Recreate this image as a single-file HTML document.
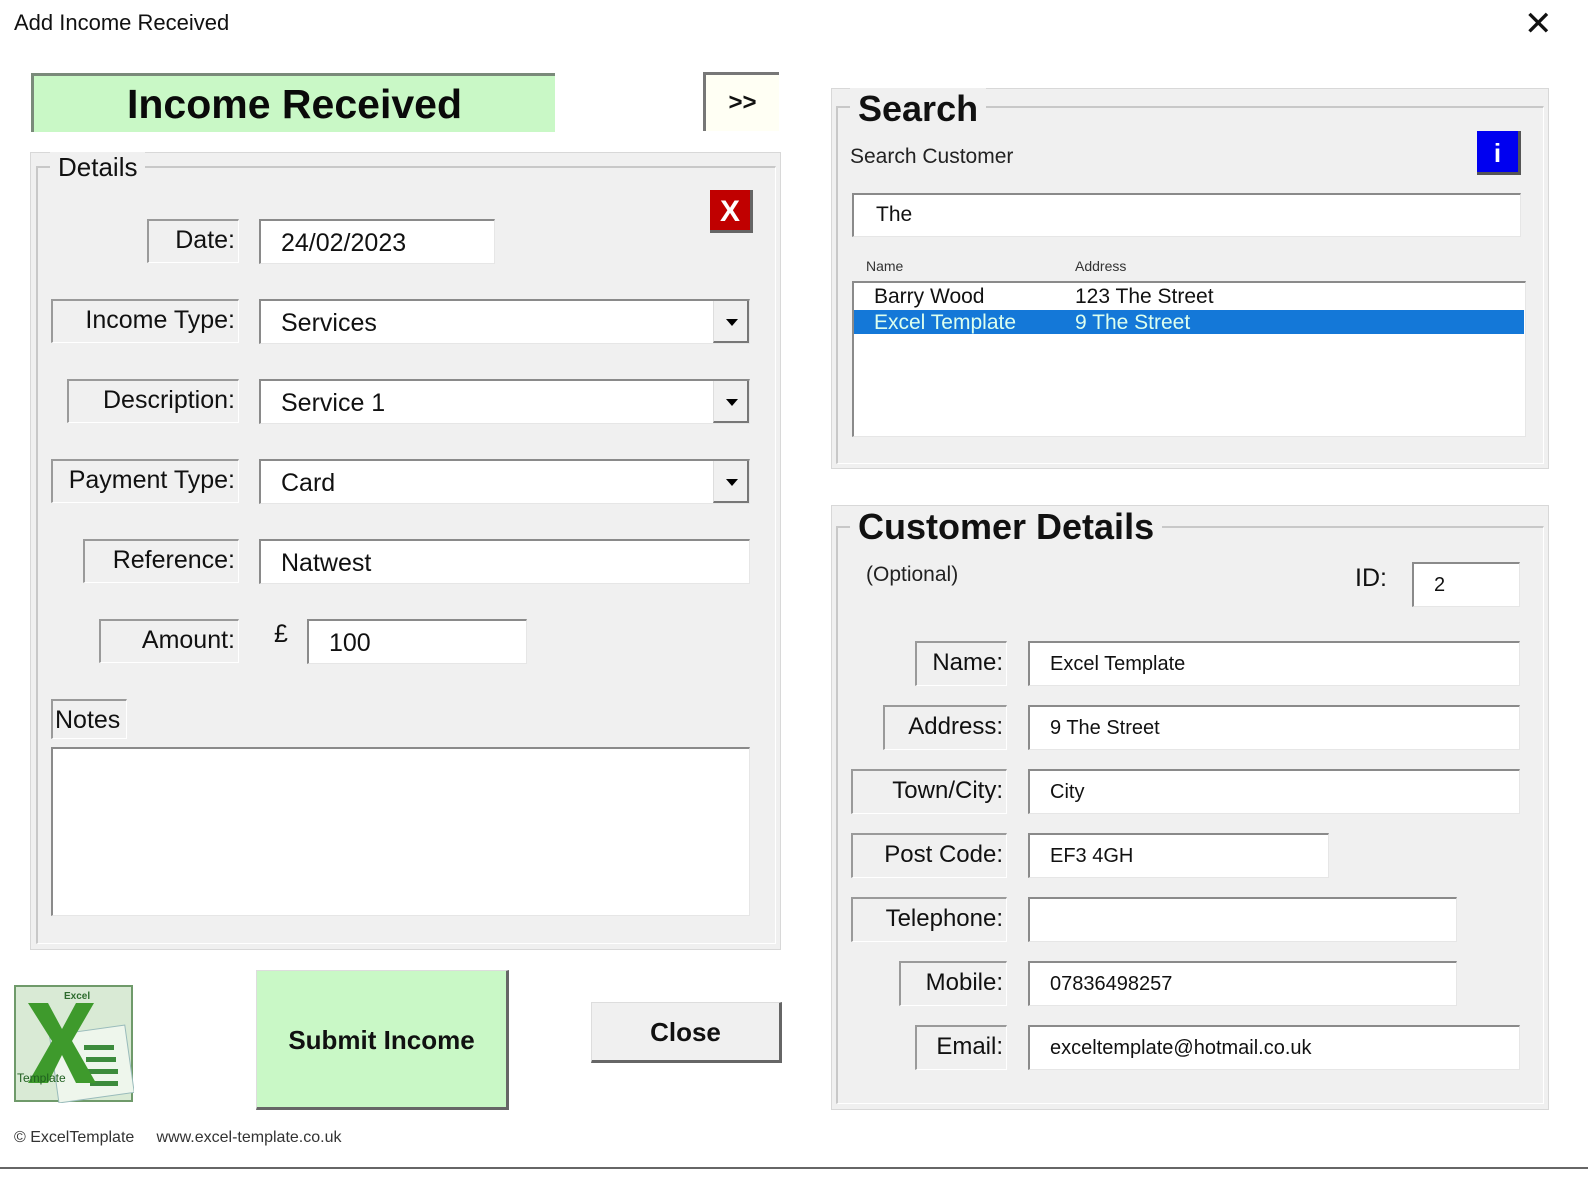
<!DOCTYPE html>
<html><head><meta charset="utf-8"><style>
*{box-sizing:border-box;margin:0;padding:0}
body{width:1588px;height:1186px;background:#fff;position:relative;overflow:hidden;font-family:"Liberation Sans","DejaVu Sans",sans-serif;color:#111}
.a{position:absolute}
.frame{position:absolute;background:#f0f0f0;border:1px solid #d8d8d8}
.gl{position:absolute;border-top:2px solid #c8c8c8;border-left:2px solid #c8c8c8;border-right:1px solid #fff;border-bottom:1px solid #fff}
.lbl{position:absolute;background:#f0f0f0;border-top:2px solid #9a9a9a;border-left:2px solid #9a9a9a;border-right:1px solid #fff;border-bottom:1px solid #fff;text-align:right;font-size:25px;padding-right:3px;line-height:38px}
.fld{position:absolute;background:#fff;border-top:2px solid #8a8a8a;border-left:2px solid #8a8a8a;border-right:1px solid #e6e6e6;border-bottom:1px solid #e6e6e6;font-size:25px;padding-left:20px;line-height:44px}
.dd{position:absolute;right:0;top:0;width:36px;height:100%;background:#f0f0f0;border-left:1px solid #ddd;border-right:2px solid #777;border-bottom:2px solid #777}
.dd:after{content:"";position:absolute;left:12px;top:18px;border-left:6px solid transparent;border-right:6px solid transparent;border-top:7px solid #000}
.r .lbl{font-size:24px;line-height:40px}
.r .fld{font-size:20px;line-height:42px}
</style></head><body>
<div class="a" style="left:14px;top:10px;font-size:22px">Add Income Received</div>
<div class="a" style="left:1524px;top:4px;font-size:34px;font-weight:300">✕</div>

<div class="a" style="left:31px;top:73px;width:524px;height:59px;background:#c9f8c6;border-top:3px solid #7a8a7a;border-left:3px solid #7a8a7a;font-weight:bold;font-size:41px;text-align:center;line-height:56px;color:#0a0a0a">Income Received</div>
<div class="a" style="left:703px;top:72px;width:76px;height:59px;background:#fffff4;border-top:3px solid #777;border-left:3px solid #777;font-size:24px;font-weight:bold;text-align:center;line-height:56px">&gt;&gt;</div>

<div class="frame" style="left:30px;top:152px;width:751px;height:798px"></div>
<div class="gl" style="left:36px;top:166px;width:740px;height:778px"></div>
<div class="a" style="left:50px;top:152px;background:#f0f0f0;padding:0 8px;font-size:26px">Details</div>
<div class="a" style="left:710px;top:190px;width:43px;height:43px;background:#c00000;color:#fff;font-weight:bold;font-size:30px;text-align:center;line-height:43px;border-right:3px solid #666;border-bottom:3px solid #666">X</div>

<div class="lbl" style="left:147px;top:219px;width:92px;height:44px">Date:</div>
<div class="fld" style="left:259px;top:219px;width:236px;height:45px">24/02/2023</div>
<div class="lbl" style="left:51px;top:299px;width:188px;height:44px">Income Type:</div>
<div class="fld" style="left:259px;top:299px;width:491px;height:45px">Services<div class="dd"></div></div>
<div class="lbl" style="left:67px;top:379px;width:172px;height:44px">Description:</div>
<div class="fld" style="left:259px;top:379px;width:491px;height:45px">Service 1<div class="dd"></div></div>
<div class="lbl" style="left:51px;top:459px;width:188px;height:44px">Payment Type:</div>
<div class="fld" style="left:259px;top:459px;width:491px;height:45px">Card<div class="dd"></div></div>
<div class="lbl" style="left:83px;top:539px;width:156px;height:44px">Reference:</div>
<div class="fld" style="left:259px;top:539px;width:491px;height:45px">Natwest</div>
<div class="lbl" style="left:99px;top:619px;width:140px;height:44px">Amount:</div>
<div class="a" style="left:274px;top:620px;font-size:25px">£</div>
<div class="fld" style="left:307px;top:619px;width:220px;height:45px">100</div>
<div class="lbl" style="left:51px;top:699px;width:76px;height:40px;text-align:left;padding-left:2px;line-height:38px">Notes</div>
<div class="fld" style="left:51px;top:747px;width:699px;height:169px"></div>

<svg class="a" style="left:14px;top:985px" width="120" height="118" viewBox="0 0 120 118">
<rect x="1" y="1" width="117" height="115" fill="#d9ead5" stroke="#6f9a6a" stroke-width="2"/>
<rect x="40" y="45" width="76" height="68" fill="#eef6ec" transform="rotate(-8 78 80)" stroke="#9bb"/>
<g fill="#3c8b3c"><rect x="70" y="60" width="30" height="5"/><rect x="72" y="72" width="30" height="5"/><rect x="74" y="84" width="30" height="5"/><rect x="76" y="96" width="28" height="5"/></g>
<path d="M14 18 L34 18 L48 44 L62 18 L80 18 L58 56 L82 98 L62 98 L48 70 L34 98 L14 98 L38 56 Z" fill="#3e9a2c"/>
<text x="50" y="14" font-size="10" font-weight="bold" fill="#2d6b2d" font-family="Liberation Sans">Excel</text>
<text x="3" y="97" font-size="12" fill="#1f5f1f" font-family="Liberation Sans">Template</text>
</svg>
<div class="a" style="left:256px;top:970px;width:253px;height:140px;background:#c9f8c6;border-right:3px solid #666;border-bottom:3px solid #666;border-top:1px solid #ddd;border-left:1px solid #ddd;font-weight:bold;font-size:26px;text-align:center;line-height:138px">Submit Income</div>
<div class="a" style="left:591px;top:1002px;width:191px;height:61px;background:#f0f0f0;border-right:3px solid #666;border-bottom:3px solid #666;border-top:1px solid #ddd;border-left:1px solid #ddd;font-weight:bold;font-size:26px;text-align:center;line-height:58px">Close</div>
<div class="a" style="left:14px;top:1129px;font-size:16px;color:#333">© ExcelTemplate&nbsp;&nbsp;&nbsp;&nbsp;&nbsp;www.excel-template.co.uk</div>
<div class="a" style="left:0;top:1167px;width:1588px;height:2px;background:#666"></div>

<!-- Search -->
<div class="frame" style="left:831px;top:88px;width:718px;height:381px"></div>
<div class="gl" style="left:836px;top:106px;width:708px;height:358px"></div>
<div class="a" style="left:850px;top:88px;background:#f0f0f0;padding:0 8px;font-size:36px;font-weight:bold">Search</div>
<div class="a" style="left:850px;top:145px;font-size:21px;color:#222">Search Customer</div>
<div class="a" style="left:1477px;top:131px;width:44px;height:44px;background:#0000f0;color:#fff;font-weight:bold;font-size:26px;text-align:center;line-height:44px;border-right:3px solid #555;border-bottom:3px solid #555">i</div>
<div class="fld" style="left:852px;top:193px;width:669px;height:44px;font-size:21px;padding-left:22px;line-height:40px">The</div>
<div class="a" style="left:866px;top:258px;font-size:14px;color:#333">Name</div>
<div class="a" style="left:1075px;top:258px;font-size:14px;color:#333">Address</div>
<div class="fld" style="left:852px;top:281px;width:674px;height:156px;padding:0"></div>
<div class="a" style="left:874px;top:285px;font-size:21px">Barry Wood</div>
<div class="a" style="left:1075px;top:285px;font-size:21px">123 The Street</div>
<div class="a" style="left:854px;top:310px;width:670px;height:24px;background:#1478d8"></div>
<div class="a" style="left:874px;top:311px;font-size:21px;color:#dfe">Excel Template</div>
<div class="a" style="left:1075px;top:311px;font-size:21px;color:#dfe">9 The Street</div>

<!-- Customer -->
<div class="frame" style="left:831px;top:505px;width:718px;height:605px"></div>
<div class="gl" style="left:836px;top:526px;width:708px;height:578px"></div>
<div class="a" style="left:850px;top:506px;background:#f0f0f0;padding:0 8px;font-size:36px;font-weight:bold">Customer Details</div>
<div class="a" style="left:866px;top:563px;font-size:21px;color:#222">(Optional)</div>
<div class="a" style="left:1355px;top:564px;font-size:25px">ID:</div>
<div class="fld" style="left:1412px;top:562px;width:108px;height:45px;font-size:20px;line-height:42px">2</div>
<div class="r">
<div class="lbl" style="left:915px;top:641px;width:92px;height:45px">Name:</div>
<div class="fld" style="left:1028px;top:641px;width:492px;height:45px">Excel Template</div>
<div class="lbl" style="left:883px;top:705px;width:124px;height:45px">Address:</div>
<div class="fld" style="left:1028px;top:705px;width:492px;height:45px">9 The Street</div>
<div class="lbl" style="left:851px;top:769px;width:156px;height:45px">Town/City:</div>
<div class="fld" style="left:1028px;top:769px;width:492px;height:45px">City</div>
<div class="lbl" style="left:851px;top:833px;width:156px;height:45px">Post Code:</div>
<div class="fld" style="left:1028px;top:833px;width:301px;height:45px">EF3 4GH</div>
<div class="lbl" style="left:851px;top:897px;width:156px;height:45px">Telephone:</div>
<div class="fld" style="left:1028px;top:897px;width:429px;height:45px"></div>
<div class="lbl" style="left:899px;top:961px;width:108px;height:45px">Mobile:</div>
<div class="fld" style="left:1028px;top:961px;width:429px;height:45px">07836498257</div>
<div class="lbl" style="left:915px;top:1025px;width:92px;height:45px">Email:</div>
<div class="fld" style="left:1028px;top:1025px;width:492px;height:45px">exceltemplate@hotmail.co.uk</div>
</div>
</body></html>
